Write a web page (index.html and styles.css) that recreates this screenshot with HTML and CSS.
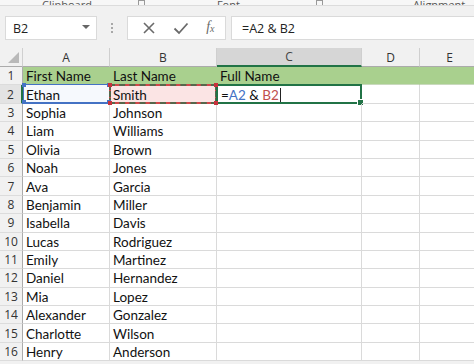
FILE: index.html
```html
<!DOCTYPE html>
<html>
<head>
<meta charset="utf-8">
<link rel="stylesheet" href="styles.css">
</head>
<body>
<div class="ribbon">
  <span class="rl rl-clip">Clipboard</span>
  <span class="rl-ico ico1"></span>
  <span class="rl rl-font">Font</span>
  <span class="rl-ico ico2"></span>
  <span class="rl rl-align">Alignment</span>
</div>
<div class="fbar">
  <div class="namebox"><span>B2</span><span class="arrow"></span></div>
  <div class="dots"><i></i><i></i><i></i></div>
  <div class="fxbtns">
    <svg class="ic" width="14" height="14" viewBox="0 0 14 14"><path d="M2 2 L12 12 M12 2 L2 12" stroke="#6a6a6a" stroke-width="1.6" fill="none"/></svg>
    <svg class="ic" width="16" height="14" viewBox="0 0 16 14"><path d="M1.5 7.5 L6 12 L14.5 2.5" stroke="#6a6a6a" stroke-width="1.8" fill="none"/></svg>
    <span class="fx">f<sub>x</sub></span>
  </div>
  <div class="finput">=A2 &amp; B2</div>
</div>
<div class="sheet">
  <div class="corner"><span class="tri"></span></div>
  <div class="ch">A</div>
  <div class="ch">B</div>
  <div class="ch ch-sel">C</div>
  <div class="ch">D</div>
  <div class="ch">E</div>

  <div class="rh">1</div>
  <div class="c hd">First Name</div>
  <div class="c hd">Last Name</div>
  <div class="c hd">Full Name</div>
  <div class="c hd"></div>
  <div class="c hd"></div>

  <div class="rh rh-sel">2</div>
  <div class="c refa">Ethan<span class="ov ov-a"><i class="k k1"></i><i class="k k2"></i><i class="k k3"></i><i class="k k4"></i></span></div>
  <div class="c refb">Smith<span class="ov ov-b"><i class="k k1"></i><i class="k k2"></i><i class="k k3"></i><i class="k k4"></i></span></div>
  <div class="c act"><span class="eq">=</span><span class="blue">A2</span>&nbsp;&amp;&nbsp;<span class="red">B2</span><span class="caret"></span><span class="ov ov-act"><i class="fh"></i></span></div>
  <div class="c"></div>
  <div class="c"></div>

  <div class="rh">3</div><div class="c">Sophia</div><div class="c">Johnson</div><div class="c"></div><div class="c"></div><div class="c"></div>
  <div class="rh">4</div><div class="c">Liam</div><div class="c">Williams</div><div class="c"></div><div class="c"></div><div class="c"></div>
  <div class="rh">5</div><div class="c">Olivia</div><div class="c">Brown</div><div class="c"></div><div class="c"></div><div class="c"></div>
  <div class="rh">6</div><div class="c">Noah</div><div class="c">Jones</div><div class="c"></div><div class="c"></div><div class="c"></div>
  <div class="rh">7</div><div class="c">Ava</div><div class="c">Garcia</div><div class="c"></div><div class="c"></div><div class="c"></div>
  <div class="rh">8</div><div class="c">Benjamin</div><div class="c">Miller</div><div class="c"></div><div class="c"></div><div class="c"></div>
  <div class="rh">9</div><div class="c">Isabella</div><div class="c">Davis</div><div class="c"></div><div class="c"></div><div class="c"></div>
  <div class="rh">10</div><div class="c">Lucas</div><div class="c">Rodriguez</div><div class="c"></div><div class="c"></div><div class="c"></div>
  <div class="rh">11</div><div class="c">Emily</div><div class="c">Martinez</div><div class="c"></div><div class="c"></div><div class="c"></div>
  <div class="rh">12</div><div class="c">Daniel</div><div class="c">Hernandez</div><div class="c"></div><div class="c"></div><div class="c"></div>
  <div class="rh">13</div><div class="c">Mia</div><div class="c">Lopez</div><div class="c"></div><div class="c"></div><div class="c"></div>
  <div class="rh">14</div><div class="c">Alexander</div><div class="c">Gonzalez</div><div class="c"></div><div class="c"></div><div class="c"></div>
  <div class="rh">15</div><div class="c">Charlotte</div><div class="c">Wilson</div><div class="c"></div><div class="c"></div><div class="c"></div>
  <div class="rh">16</div><div class="c">Henry</div><div class="c">Anderson</div><div class="c"></div><div class="c"></div><div class="c"></div>
</div>
</body>
</html>
```

FILE: styles.css
```css
html, body {
  margin: 0;
  padding: 0;
}
body {
  width: 474px;
  height: 364px;
  overflow: hidden;
  background: #f1f1f1;
  font-family: Lato, "Liberation Sans", sans-serif;
}
.ribbon {
  height: 5px;
  overflow: hidden;
  background: #f7f7f7;
  border-bottom: 1px solid #dcdcdc;
  display: flex;
  align-items: flex-end;
  font-family: "Open Sans", sans-serif;
  font-size: 11px;
  color: #555;
  white-space: nowrap;
}
.rl {
  line-height: 11px;
  margin-bottom: -5px;
}
.rl-clip { margin-left: 42px; }
.rl-font { margin-left: 72px; }
.rl-align { margin-left: 90px; }
.rl-ico {
  width: 5px;
  height: 4px;
  border: 1px solid #999;
  border-bottom: none;
}
.ico1 { margin-left: 46px; }
.ico2 { margin-left: 76px; }
.fbar {
  margin-top: 10px;
  height: 24px;
  display: flex;
}
.namebox {
  margin-left: 5px;
  width: 92px;
  box-sizing: border-box;
  background: #fff;
  border: 1px solid #dadada;
  display: flex;
  align-items: center;
  justify-content: space-between;
  padding: 0 6px 0 7px;
  font-family: "Open Sans", sans-serif;
  font-size: 12.5px;
  color: #222;
}
.arrow {
  width: 0;
  height: 0;
  border-left: 4px solid transparent;
  border-right: 4px solid transparent;
  border-top: 4px solid #666;
  margin-top: -2px;
}
.dots {
  width: 30px;
  display: flex;
  flex-direction: column;
  align-items: center;
  justify-content: center;
  gap: 2px;
}
.dots i {
  width: 2px;
  height: 2px;
  background: #a8a8a8;
}
.fxbtns {
  width: 99px;
  box-sizing: border-box;
  background: #fff;
  border: 1px solid #dadada;
  display: flex;
  align-items: center;
  justify-content: space-around;
  padding: 0 2px 0 6px;
}
.fx {
  font-family: "Liberation Serif", serif;
  font-style: italic;
  font-size: 14px;
  color: #6a6a6a;
  line-height: 14px;
}
.fx sub {
  font-size: 10px;
  vertical-align: -1px;
}
.finput {
  margin-left: 5px;
  flex: 1;
  background: #fff;
  border: 1px solid #dadada;
  border-right: none;
  display: flex;
  align-items: center;
  padding-left: 10px;
  font-family: "Open Sans", sans-serif;
  font-size: 12.5px;
  color: #222;
}
.sheet {
  margin-top: 8px;
  display: grid;
  grid-template-columns: 23px 87px 107px 145px 58px 60px;
  grid-template-rows: 19px repeat(16, 18.4px);
  background: #fff;
}
.corner {
  background: #f1f1f1;
  border-right: 1px solid #d0d0d0;
  border-bottom: 1px solid #ababab;
  box-sizing: border-box;
  display: flex;
  align-items: flex-end;
  justify-content: flex-end;
  padding: 0 3px 3px 0;
}
.tri {
  width: 0;
  height: 0;
  border-left: 11px solid transparent;
  border-bottom: 11px solid #b9b9b9;
}
.ch {
  background: #f1f1f1;
  border-right: 1px solid #cfcfcf;
  border-bottom: 1px solid #ababab;
  box-sizing: border-box;
  display: flex;
  align-items: center;
  justify-content: center;
  font-family: "Open Sans", sans-serif;
  font-size: 12px;
  color: #333;
}
.ch-sel {
  background: #d6d6d6;
  border-bottom: 2px solid #217346;
  color: #444;
}
.rh {
  background: #f1f1f1;
  border-right: 1px solid #ababab;
  border-bottom: 1px solid #dcdcdc;
  box-sizing: border-box;
  display: flex;
  align-items: center;
  justify-content: center;
  font-family: "Open Sans", sans-serif;
  font-size: 12px;
  color: #333;
}
.rh-sel {
  background: #e3e3e3;
  border-right: 2px solid #217346;
}
.c {
  position: relative;
  border-right: 1px solid #dadada;
  border-bottom: 1px solid #dadada;
  box-sizing: border-box;
  display: flex;
  align-items: center;
  padding-left: 3px;
  padding-top: 1px;
  font-size: 13.5px;
  color: #111;
  white-space: nowrap;
}
.c.hd {
  background: #a9d08e;
  border-right-color: #a9d08e;
  border-bottom-color: #c9d9bd;
}
.refa { background: #f6f9fd; }
.refb { background: #fbe4e4; }
.ov {
  position: absolute;
  pointer-events: none;
  box-sizing: border-box;
}
.ov-a {
  left: 0;
  top: -1px;
  right: -1px;
  bottom: -1px;
  border: 1px solid #4472c4;
  border-bottom-width: 2px;
}
.ov-b {
  left: -1px;
  top: -1px;
  right: -1px;
  bottom: -1px;
  border: 2px solid #d0474a;
}
.ov-b::before {
  content: "";
  position: absolute;
  left: -2px;
  top: -2px;
  right: -2px;
  bottom: -2px;
  border: 2px dashed #55674b;
}
.k {
  position: absolute;
  width: 4px;
  height: 4px;
  z-index: 1;
}
.ov-a .k { background: #4472c4; }
.ov-b .k { background: #c8323c; }
.k1 { left: -3px; top: -3px; }
.k2 { right: -3px; top: -3px; }
.k3 { left: -3px; bottom: -3px; }
.k4 { right: -3px; bottom: -3px; }
.ov-a .k1 { left: -2px; top: -2px; }
.ov-a .k2 { right: -2px; top: -2px; }
.ov-a .k3 { left: -2px; bottom: -2px; }
.ov-a .k4 { right: -2px; bottom: -2px; }
.act {
  padding-left: 4px;
}
.ov-act {
  left: -1px;
  top: -1px;
  right: -1px;
  bottom: -1px;
  border: 2px solid #217346;
}
.fh {
  position: absolute;
  right: -4px;
  bottom: -4px;
  width: 5px;
  height: 5px;
  background: #217346;
  border: 1px solid #fff;
}
.blue { color: #4472c4; }
.red { color: #c0504d; }
.caret {
  width: 1px;
  height: 14px;
  background: #222;
  margin-left: 1px;
}
```
